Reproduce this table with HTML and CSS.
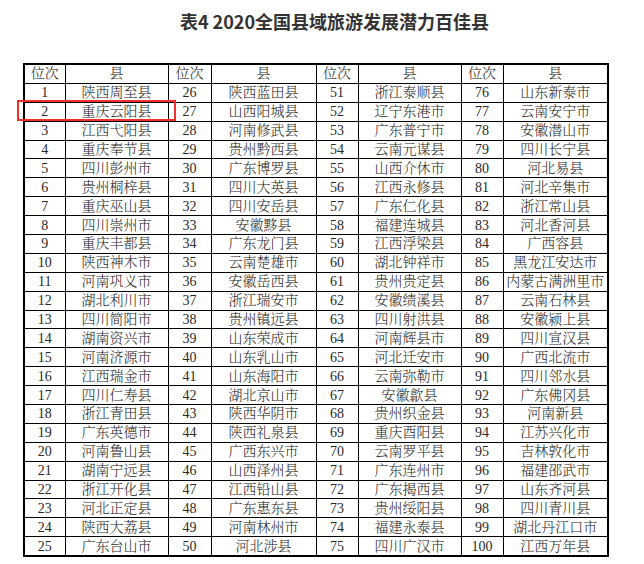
FILE: index.html
```html
<!DOCTYPE html>
<html lang="zh">
<head>
<meta charset="utf-8">
<link rel="stylesheet" href="styles.css">
</head>
<body>
<h1 class="title">表4 2020全国县域旅游发展潜力百佳县</h1>
<div class="wrap">
<table class="rank">
<colgroup>
<col class="c-no1"><col class="c-name1"><col class="c-no2"><col class="c-name2"><col class="c-no3"><col class="c-name3"><col class="c-no4"><col class="c-name4">
</colgroup>
<tbody id="rows">
<tr class="head"><td>位次</td><td>县</td><td>位次</td><td>县</td><td>位次</td><td>县</td><td>位次</td><td>县</td></tr>
<tr><td class="n">1</td><td>陕西周至县</td><td class="n">26</td><td>陕西蓝田县</td><td class="n">51</td><td>浙江泰顺县</td><td class="n">76</td><td>山东新泰市</td></tr>
<tr><td class="n">2</td><td>重庆云阳县</td><td class="n">27</td><td>山西阳城县</td><td class="n">52</td><td>辽宁东港市</td><td class="n">77</td><td>云南安宁市</td></tr>
<tr><td class="n">3</td><td>江西弋阳县</td><td class="n">28</td><td>河南修武县</td><td class="n">53</td><td>广东普宁市</td><td class="n">78</td><td>安徽潜山市</td></tr>
<tr><td class="n">4</td><td>重庆奉节县</td><td class="n">29</td><td>贵州黔西县</td><td class="n">54</td><td>云南元谋县</td><td class="n">79</td><td>四川长宁县</td></tr>
<tr><td class="n">5</td><td>四川彭州市</td><td class="n">30</td><td>广东博罗县</td><td class="n">55</td><td>山西介休市</td><td class="n">80</td><td>河北易县</td></tr>
<tr><td class="n">6</td><td>贵州桐梓县</td><td class="n">31</td><td>四川大英县</td><td class="n">56</td><td>江西永修县</td><td class="n">81</td><td>河北辛集市</td></tr>
<tr><td class="n">7</td><td>重庆巫山县</td><td class="n">32</td><td>四川安岳县</td><td class="n">57</td><td>广东仁化县</td><td class="n">82</td><td>浙江常山县</td></tr>
<tr><td class="n">8</td><td>四川崇州市</td><td class="n">33</td><td>安徽黟县</td><td class="n">58</td><td>福建连城县</td><td class="n">83</td><td>河北香河县</td></tr>
<tr><td class="n">9</td><td>重庆丰都县</td><td class="n">34</td><td>广东龙门县</td><td class="n">59</td><td>江西浮梁县</td><td class="n">84</td><td>广西容县</td></tr>
<tr><td class="n">10</td><td>陕西神木市</td><td class="n">35</td><td>云南楚雄市</td><td class="n">60</td><td>湖北钟祥市</td><td class="n">85</td><td>黑龙江安达市</td></tr>
<tr><td class="n">11</td><td>河南巩义市</td><td class="n">36</td><td>安徽岳西县</td><td class="n">61</td><td>贵州贵定县</td><td class="n">86</td><td>内蒙古满洲里市</td></tr>
<tr><td class="n">12</td><td>湖北利川市</td><td class="n">37</td><td>浙江瑞安市</td><td class="n">62</td><td>安徽绩溪县</td><td class="n">87</td><td>云南石林县</td></tr>
<tr><td class="n">13</td><td>四川简阳市</td><td class="n">38</td><td>贵州镇远县</td><td class="n">63</td><td>四川射洪县</td><td class="n">88</td><td>安徽颍上县</td></tr>
<tr><td class="n">14</td><td>湖南资兴市</td><td class="n">39</td><td>山东荣成市</td><td class="n">64</td><td>河南辉县市</td><td class="n">89</td><td>四川宣汉县</td></tr>
<tr><td class="n">15</td><td>河南济源市</td><td class="n">40</td><td>山东乳山市</td><td class="n">65</td><td>河北迁安市</td><td class="n">90</td><td>广西北流市</td></tr>
<tr><td class="n">16</td><td>江西瑞金市</td><td class="n">41</td><td>山东海阳市</td><td class="n">66</td><td>云南弥勒市</td><td class="n">91</td><td>四川邻水县</td></tr>
<tr><td class="n">17</td><td>四川仁寿县</td><td class="n">42</td><td>湖北京山市</td><td class="n">67</td><td>安徽歙县</td><td class="n">92</td><td>广东佛冈县</td></tr>
<tr><td class="n">18</td><td>浙江青田县</td><td class="n">43</td><td>陕西华阴市</td><td class="n">68</td><td>贵州织金县</td><td class="n">93</td><td>河南新县</td></tr>
<tr><td class="n">19</td><td>广东英德市</td><td class="n">44</td><td>陕西礼泉县</td><td class="n">69</td><td>重庆酉阳县</td><td class="n">94</td><td>江苏兴化市</td></tr>
<tr><td class="n">20</td><td>河南鲁山县</td><td class="n">45</td><td>广西东兴市</td><td class="n">70</td><td>云南罗平县</td><td class="n">95</td><td>吉林敦化市</td></tr>
<tr><td class="n">21</td><td>湖南宁远县</td><td class="n">46</td><td>山西泽州县</td><td class="n">71</td><td>广东连州市</td><td class="n">96</td><td>福建邵武市</td></tr>
<tr><td class="n">22</td><td>浙江开化县</td><td class="n">47</td><td>江西铅山县</td><td class="n">72</td><td>广东揭西县</td><td class="n">97</td><td>山东齐河县</td></tr>
<tr><td class="n">23</td><td>河北正定县</td><td class="n">48</td><td>广东惠东县</td><td class="n">73</td><td>贵州绥阳县</td><td class="n">98</td><td>四川青川县</td></tr>
<tr><td class="n">24</td><td>陕西大荔县</td><td class="n">49</td><td>河南林州市</td><td class="n">74</td><td>福建永泰县</td><td class="n">99</td><td>湖北丹江口市</td></tr>
<tr><td class="n">25</td><td>广东台山市</td><td class="n">50</td><td>河北涉县</td><td class="n">75</td><td>四川广汉市</td><td class="n">100</td><td>江西万年县</td></tr>
</tbody>
</table>
<div class="highlight"></div>
</div>
</body>
</html>
```

FILE: styles.css
```css
html, body {
  margin: 0;
  padding: 0;
  background: #ffffff;
}

.title {
  margin: 0;
  padding: 10px 0 0 25px;
  height: 53px;
  box-sizing: border-box;
  text-align: center;
  font-family: "Noto Sans CJK SC", "Noto Sans", sans-serif;
  font-weight: 700;
  font-size: 18px;
  line-height: 22px;
  color: #333333;
}

.wrap {
  position: relative;
  padding: 10px 0 0 23px;
}

.rank {
  border-collapse: collapse;
  table-layout: fixed;
  width: 584px;
  border: 2px solid #000000;
  font-family: "Liberation Serif", "Noto Serif CJK SC", "Noto Sans CJK SC", serif;
  font-weight: 300;
  font-size: 14px;
  color: #2a2a2a;
}

.c-no1 { width: 41px; }
.c-name1 { width: 103px; }
.c-no2 { width: 43px; }
.c-name2 { width: 105px; }
.c-no3 { width: 42px; }
.c-name3 { width: 103px; }
.c-no4 { width: 42px; }
.c-name4 { width: 105px; }

.rank td {
  border: 1px solid #000000;
  height: 17.9px;
  padding: 0;
  text-align: center;
  vertical-align: middle;
  line-height: 17px;
  white-space: nowrap;
  overflow: hidden;
}

.rank td.n {
  font-weight: 400;
  font-size: 14px;
}

.highlight {
  position: absolute;
  left: 17px;
  top: 47px;
  width: 155px;
  height: 17px;
  border: 2px solid #f0302c;
  pointer-events: none;
}
```
